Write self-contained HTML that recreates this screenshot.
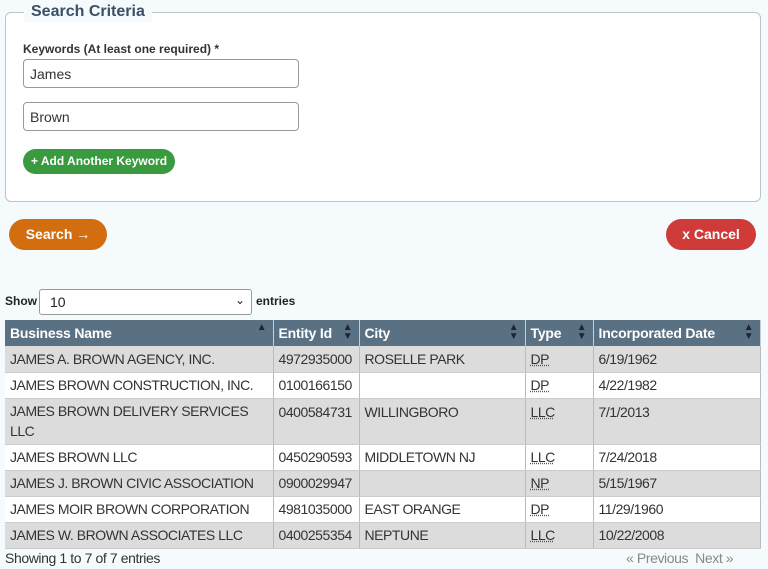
<!DOCTYPE html>
<html><head><meta charset="utf-8"><style>
*{box-sizing:border-box;margin:0;padding:0}
body{width:768px;height:569px;background:#f5fafd;font-family:"Liberation Sans",Arial,sans-serif;position:relative;overflow:hidden;color:#222}
.abs{position:absolute}
.fs{left:5px;top:12px;width:756px;height:190px;border:1px solid #bfc3c6;border-radius:6px;background:#fff}
.legend{left:24px;top:2px;padding:0 7px;background:#f5fafd;color:#3b4f66;font-weight:bold;font-size:16px;line-height:20px}
.lbl{left:23px;top:42px;font-size:12px;font-weight:bold;color:#333}
.inp{left:23px;width:276px;height:29px;border:1px solid #999;border-radius:4px;background:#fff;font-size:14px;padding:6px 6px;color:#333}
.btn{color:#fff;font-weight:bold;border-radius:16px;text-align:center}
table{position:absolute;left:5px;top:320px;width:755px;border-collapse:collapse;font-size:14px;table-layout:fixed;letter-spacing:-0.45px}
th{background:#5a7184;color:#fff;text-align:left;height:26px;padding:0 5px;border-right:1px solid #c8d0d6;position:relative;font-size:14px;white-space:nowrap;letter-spacing:-0.2px}
td{height:26px;padding:0 5px;border-right:1px solid #bbb;border-bottom:1px solid #ccc;color:#333;line-height:20px;white-space:nowrap;overflow:hidden}
tr.g td{background:#dcdcdc}
tr.w td{background:#fff}
.ab{text-decoration:underline dotted #555}
.s{position:absolute;right:6px;top:3px;font-size:10px;line-height:9px;color:#223}
</style></head><body>
<div class="abs fs"></div>
<div class="abs legend">Search Criteria</div>
<div class="abs lbl">Keywords (At least one required) *</div>
<div class="abs inp" style="top:59px">James</div>
<div class="abs inp" style="top:102px">Brown</div>
<div class="abs btn" style="left:23px;top:149px;width:152px;height:25px;background:#3a9a3f;font-size:12px;line-height:24px">+ Add Another Keyword</div>
<div class="abs btn" style="left:9px;top:219px;width:98px;height:31px;background:#d26e10;font-size:14px;line-height:30px">Search →</div>
<div class="abs btn" style="left:666px;top:219px;width:90px;height:31px;background:#cf3b38;font-size:14px;line-height:30px">x Cancel</div>
<div class="abs" style="left:5px;top:294px;font-size:12px;font-weight:bold">Show</div>
<div class="abs" style="left:39px;top:289px;width:213px;height:26px;border:1px solid #999;border-radius:3px;background:#fff;font-size:14px;padding:4px 10px">10<span style="position:absolute;right:6px;top:3px;font-size:12px">⌄</span></div>
<div class="abs" style="left:256px;top:294px;font-size:12px;font-weight:bold">entries</div>
<table>
<colgroup><col style="width:268px"><col style="width:86px"><col style="width:166px"><col style="width:68px"><col style="width:167px"></colgroup>
<tr><th>Business Name<span class="s">▲</span></th><th>Entity Id<span class="s">▲<br>▼</span></th><th>City<span class="s">▲<br>▼</span></th><th>Type<span class="s">▲<br>▼</span></th><th>Incorporated Date<span class="s">▲<br>▼</span></th></tr>
<tr class="g"><td>JAMES A. BROWN AGENCY, INC.</td><td>4972935000</td><td>ROSELLE PARK</td><td><span class="ab">DP</span></td><td>6/19/1962</td></tr>
<tr class="w"><td>JAMES BROWN CONSTRUCTION, INC.</td><td>0100166150</td><td></td><td><span class="ab">DP</span></td><td>4/22/1982</td></tr>
<tr class="g"><td style="height:46px">JAMES BROWN DELIVERY SERVICES<br>LLC</td><td style="vertical-align:top;padding-top:3px">0400584731</td><td style="vertical-align:top;padding-top:3px">WILLINGBORO</td><td style="vertical-align:top;padding-top:3px"><span class="ab">LLC</span></td><td style="vertical-align:top;padding-top:3px">7/1/2013</td></tr>
<tr class="w"><td>JAMES BROWN LLC</td><td>0450290593</td><td>MIDDLETOWN NJ</td><td><span class="ab">LLC</span></td><td>7/24/2018</td></tr>
<tr class="g"><td>JAMES J. BROWN CIVIC ASSOCIATION</td><td>0900029947</td><td></td><td><span class="ab">NP</span></td><td>5/15/1967</td></tr>
<tr class="w"><td>JAMES MOIR BROWN CORPORATION</td><td>4981035000</td><td>EAST ORANGE</td><td><span class="ab">DP</span></td><td>11/29/1960</td></tr>
<tr class="g"><td>JAMES W. BROWN ASSOCIATES LLC</td><td>0400255354</td><td>NEPTUNE</td><td><span class="ab">LLC</span></td><td>10/22/2008</td></tr>
</table>
<div class="abs" style="left:5px;top:550px;font-size:14px;color:#333;letter-spacing:-0.4px">Showing 1 to 7 of 7 entries</div>
<div class="abs" style="left:626px;top:550px;font-size:14px;color:#888;letter-spacing:-0.4px">« Previous&nbsp;&nbsp;Next »</div>
</body></html>
